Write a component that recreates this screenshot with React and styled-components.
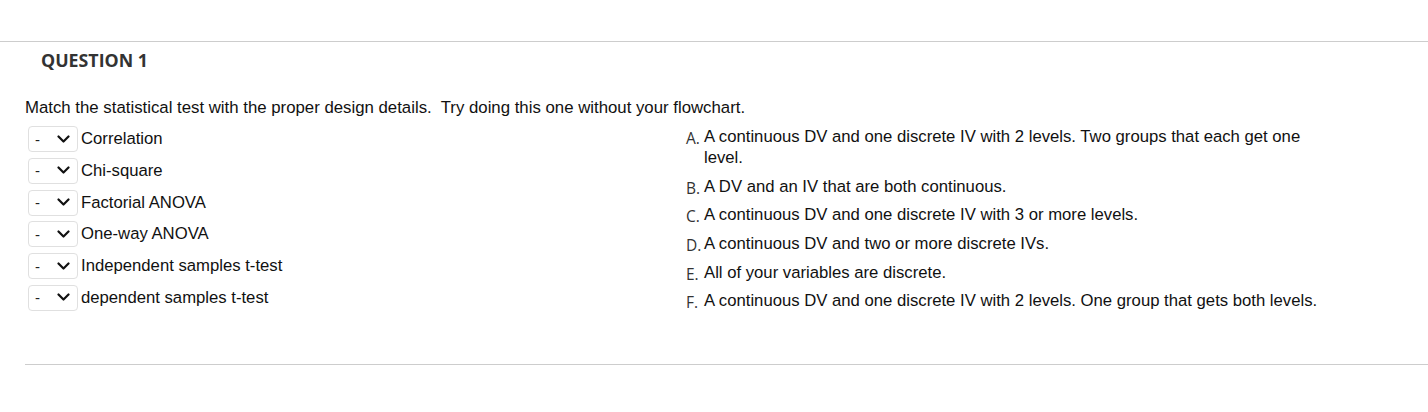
import React from 'react';
import styled, { createGlobalStyle } from 'styled-components';

const GlobalStyle = createGlobalStyle`
  body {
    margin: 0;
    background: #fff;
    font-family: "Liberation Sans", Arial, sans-serif;
    color: #111;
  }
`;

const Page = styled.div`
  padding-top: 41px;
`;

const Rule = styled.div`
  height: 1px;
  background: #cdcdcd;
  margin-left: ${props => props.inset || 0}px;
`;

const Heading = styled.h2`
  margin: 0;
  padding: 7px 0 0 41px;
  font-family: "Open Sans", sans-serif;
  font-weight: 700;
  font-size: 17.8px;
  line-height: 22px;
  color: #333;
`;

const Body = styled.div`
  box-sizing: border-box;
  padding: 27px 0 0 25px;
  height: 293px;
`;

const Prompt = styled.p`
  margin: 0 0 8px;
  font-size: 16.8px;
  line-height: 20px;
`;

const Columns = styled.div`
  display: grid;
  grid-template-columns: 661px 640px;
`;

const Pairs = styled.div`
  display: flex;
  flex-direction: column;
  gap: 5.8px;
  padding-left: 3px;
`;

const Pair = styled.div`
  display: flex;
  align-items: center;
  gap: 3px;
  height: 26px;
  font-size: 16.7px;
`;

const Select = styled.div`
  box-sizing: border-box;
  width: 50px;
  height: 26px;
  border: 1px solid #e0e0e0;
  border-radius: 4px;
  display: flex;
  align-items: center;
  justify-content: space-between;
  padding: 0 7px 0 6px;
  font-size: 15px;
  color: #222;
`;

const Answers = styled.ol`
  list-style: none;
  margin: 0;
  padding: 0;
  display: flex;
  flex-direction: column;
  gap: 7.7px;
`;

const Answer = styled.li`
  display: flex;
  font-size: 16.7px;
  line-height: 21px;
`;

const Letter = styled.span`
  flex: 0 0 18px;
  padding-top: 2px;
  margin-bottom: -2px;
  font-family: "Open Sans", sans-serif;
  font-size: 15.5px;
  color: #333;
`;

const Chevron = () => (
  <svg width="13" height="9" viewBox="0 0 13 9" fill="none">
    <path d="M1.5 1.5 L6.5 6.5 L11.5 1.5" stroke="#111" strokeWidth="2.2" strokeLinecap="round" strokeLinejoin="round" />
  </svg>
);

const tests = [
  'Correlation',
  'Chi-square',
  'Factorial ANOVA',
  'One-way ANOVA',
  'Independent samples t-test',
  'dependent samples t-test',
];

const answers = [
  ['A.', 'A continuous DV and one discrete IV with 2 levels. Two groups that each get one level.'],
  ['B.', 'A DV and an IV that are both continuous.'],
  ['C.', 'A continuous DV and one discrete IV with 3 or more levels.'],
  ['D.', 'A continuous DV and two or more discrete IVs.'],
  ['E.', 'All of your variables are discrete.'],
  ['F.', 'A continuous DV and one discrete IV with 2 levels. One group that gets both levels.'],
];

const App = () => (
  <>
    <GlobalStyle />
    <Page>
      <Rule />
      <Heading>QUESTION 1</Heading>
      <Body>
        <Prompt>Match the statistical test with the proper design details.&nbsp; Try doing this one without your flowchart.</Prompt>
        <Columns>
          <Pairs>
            {tests.map(t => (
              <Pair key={t}>
                <Select>
                  <span>-</span>
                  <Chevron />
                </Select>
                {t}
              </Pair>
            ))}
          </Pairs>
          <Answers>
            {answers.map(([l, t]) => (
              <Answer key={l}>
                <Letter>{l}</Letter>
                <span>{t}</span>
              </Answer>
            ))}
          </Answers>
        </Columns>
      </Body>
      <Rule inset={25} />
    </Page>
  </>
);

export default App;
